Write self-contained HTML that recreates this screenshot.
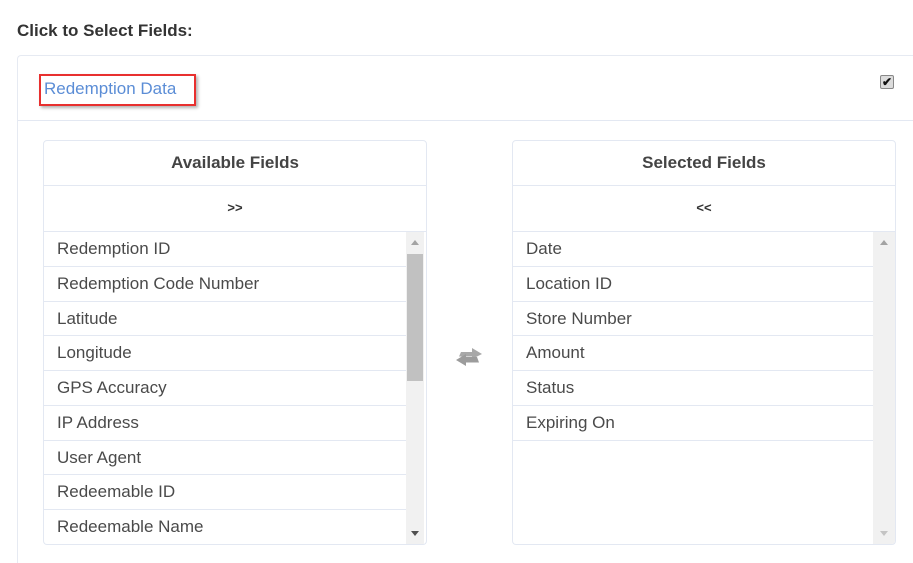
<!DOCTYPE html>
<html><head><style>
*{box-sizing:border-box;margin:0;padding:0}
html,body{width:913px;height:563px;overflow:hidden}
body{background:#fff;font-family:"Liberation Sans",Arial,sans-serif;color:#4a4a4a;position:relative}
.t{position:absolute;left:17px;top:21px;font-size:17px;font-weight:bold;color:#333}
.panel{position:absolute;left:17px;top:55px;width:896px;height:508px;border:1px solid #e6eaf2;border-right:none;border-bottom:none;border-radius:4px 0 0 0}
.hd{position:absolute;left:0;top:0;width:100%;height:65px;border-bottom:1px solid #e3e8f2}
.link{position:absolute;left:21px;top:18px;width:157px;height:32px;border:2px solid #e8302f;box-shadow:2px 2px 3px rgba(0,0,0,.3);color:#5b8dd6;font-size:17px;padding:3px 0 0 3px}
.cb{position:absolute;left:862px;top:19px;width:14px;height:14px;border:1px solid #888;border-radius:2px;background:#dcdcdc;font-size:12px;line-height:13px;text-align:center;color:#111;font-weight:bold}
.box{position:absolute;width:384px}
.h1{height:46px;border:1px solid #e3e8f2;border-radius:4px 4px 0 0;text-align:center;font-weight:bold;font-size:17px;line-height:44px;color:#444}
.h2{height:46px;border:1px solid #e3e8f2;text-align:center;font-weight:bold;font-size:13px;line-height:44px;color:#333}
.list{position:relative;height:313px;border:1px solid #e3e8f2;border-top:none;border-radius:0 0 4px 4px;overflow:hidden}
.row{height:34.75px;border-bottom:1px solid #e3e8f2;padding-left:13px;font-size:17px;line-height:34px;color:#4a4a4a;margin-right:20px}
.sb{position:absolute;right:2px;top:0;width:18px;height:100%;background:#f1f1f1}
.sb .th{position:absolute;left:1px;top:22px;width:16px;height:127px;background:#c1c1c1}
.up{position:absolute;left:5px;top:8px;border:4px solid transparent;border-bottom:5px solid #a3a3a3;border-top:none}
.dn{position:absolute;left:5px;bottom:8px;border:4px solid transparent;border-top:5px solid #505050;border-bottom:none}
</style></head><body>
<div class="t">Click to Select Fields:</div>
<div class="panel">
 <div class="hd"><div class="link">Redemption Data</div><div class="cb">✔</div></div>
</div>
<div class="box" style="left:43px;top:140px">
 <div class="h1">Available Fields</div>
 <div class="h2" style="border-top:none">&gt;&gt;</div>
 <div class="list">
  <div class="row">Redemption ID</div>
  <div class="row">Redemption Code Number</div>
  <div class="row">Latitude</div>
  <div class="row">Longitude</div>
  <div class="row">GPS Accuracy</div>
  <div class="row">IP Address</div>
  <div class="row">User Agent</div>
  <div class="row">Redeemable ID</div>
  <div class="row">Redeemable Name</div>
  <div class="sb"><div class="up"></div><div class="th"></div><div class="dn"></div></div>
 </div>
</div>
<svg style="position:absolute;left:455px;top:347px" width="28" height="20" viewBox="0 0 28 20">
 <path d="M6 5 H17 V1 L27 7 L17 12 V9.5 H4 Z" fill="#a8a8a8"/>
 <path d="M22 10 H11 V7 L1 13 L11 19 V15.5 H24 Z" fill="#9c9c9c"/>
</svg>
<div class="box" style="left:512px;top:140px">
 <div class="h1">Selected Fields</div>
 <div class="h2" style="border-top:none">&lt;&lt;</div>
 <div class="list">
  <div class="row">Date</div>
  <div class="row">Location ID</div>
  <div class="row">Store Number</div>
  <div class="row">Amount</div>
  <div class="row">Status</div>
  <div class="row">Expiring On</div>
  <div class="sb" style="right:0;width:22px"><div class="up" style="left:7px"></div><div class="dn" style="left:7px;border-top-color:#c4c4c4"></div></div>
 </div>
</div>
</body></html>
